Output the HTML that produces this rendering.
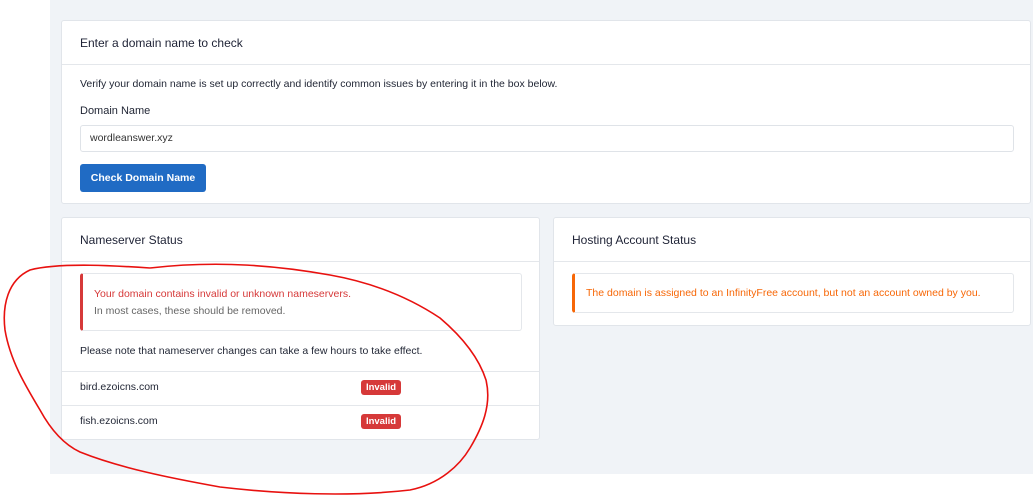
<!DOCTYPE html>
<html><head><style>
*{box-sizing:border-box;margin:0;padding:0}
body{width:1033px;height:496px;background:#fff;position:relative;overflow:hidden;font-family:"Liberation Sans",sans-serif;color:#1f2433}
.bg{position:absolute;left:50px;top:0;width:983px;height:474px;background:#f0f3f7}
.card{position:absolute;background:#fff;border:1px solid #e1e5ea;border-radius:3px}
.hd{height:44px;border-bottom:1px solid #e4e7eb;padding:0 18px;font-size:12px;line-height:44px;color:#1e2235}
.t{position:absolute;font-size:10.5px;white-space:nowrap}
.alert{position:absolute;border:1px solid #e4e7eb;border-radius:3px;background:#fff}
.badge{position:absolute;background:#d63939;color:#fff;font-size:9.5px;font-weight:bold;border-radius:3px;width:40px;height:15px;line-height:15px;text-align:center}
</style></head><body>
<div class="bg"></div>
<div class="card" style="left:61px;top:20px;width:970px;height:184px">
 <div class="hd">Enter a domain name to check</div>
 <div class="t" style="left:18px;top:57px">Verify your domain name is set up correctly and identify common issues by entering it in the box below.</div>
 <div class="t" style="left:18px;top:84px;font-size:11px">Domain Name</div>
 <div style="position:absolute;left:18px;top:104px;width:934px;height:27px;border:1px solid #dfe3e8;border-radius:3px"></div>
 <div class="t" style="left:28px;top:111px;color:#333">wordleanswer.xyz</div>
 <div style="position:absolute;left:18px;top:143px;width:126px;height:28px;background:#206bc4;border-radius:3px;color:#fff;font-size:10.5px;font-weight:bold;line-height:28px;text-align:center">Check Domain Name</div>
</div>
<div class="card" style="left:61px;top:217px;width:479px;height:223px">
 <div class="hd">Nameserver Status</div>
 <div class="alert" style="left:18px;top:55px;width:442px;height:58px;border-left:3px solid #d63939"></div>
 <div class="t" style="left:32px;top:70px;color:#d63939">Your domain contains invalid or unknown nameservers.</div>
 <div class="t" style="left:32px;top:87px;color:#666">In most cases, these should be removed.</div>
 <div class="t" style="left:18px;top:127px">Please note that nameserver changes can take a few hours to take effect.</div>
 <div style="position:absolute;left:0;top:153px;width:100%;border-top:1px solid #e4e7eb"></div>
 <div class="t" style="left:18px;top:163px">bird.ezoicns.com</div>
 <div class="badge" style="left:299px;top:162px">Invalid</div>
 <div style="position:absolute;left:0;top:187px;width:100%;border-top:1px solid #e4e7eb"></div>
 <div class="t" style="left:18px;top:197px">fish.ezoicns.com</div>
 <div class="badge" style="left:299px;top:196px">Invalid</div>
</div>
<div class="card" style="left:553px;top:217px;width:478px;height:109px">
 <div class="hd">Hosting Account Status</div>
 <div class="alert" style="left:18px;top:55px;width:442px;height:40px;border-left:3px solid #f76707"></div>
 <div class="t" style="left:32px;top:69px;color:#f76707">The domain is assigned to an InfinityFree account, but not an account owned by you.</div>
</div>
<svg style="position:absolute;left:0;top:0" width="1033" height="496"><path d="M150,268 C120,266 60,262 30,270 C8,280 2,305 5,330 C10,360 25,385 40,410 C52,432 65,445 80,452 C120,468 170,478 220,487 C280,494 350,497 410,490 C440,484 460,465 470,448 C482,428 492,405 486,380 C478,355 460,335 440,318 C410,298 375,283 330,275 C280,266 220,260 150,268" fill="none" stroke="#e8110f" stroke-width="1.6"/></svg>
</body></html>
